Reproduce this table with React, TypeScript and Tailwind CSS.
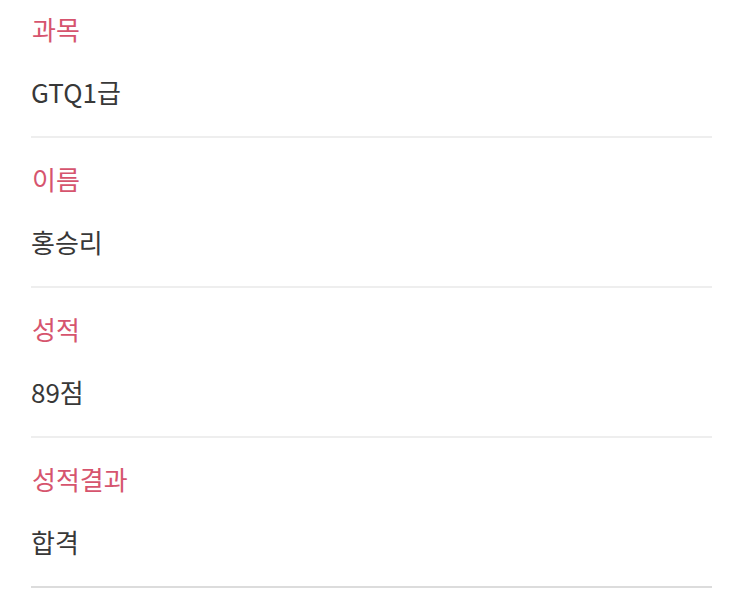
import React from 'react';

const rows = [
  { label: '과목', value: 'GTQ1급' },
  { label: '이름', value: '홍승리' },
  { label: '성적', value: '89점' },
  { label: '성적결과', value: '합격' },
];

export default function App() {
  return (
    <div
      className="w-[743px] h-[610px] bg-white px-[31px] overflow-hidden"
      style={{ fontFamily: '"Noto Sans CJK KR", "Noto Sans", sans-serif' }}
    >
      <div className="-mt-[12px]">
        {rows.map((row, i) => (
          <div
            key={row.label}
            className={`h-[150px] flex flex-col border-b-2 ${i === rows.length - 1 ? 'border-[#dcdcdc]' : 'border-[#eeeeee]'}`}
          >
            <span className="mt-[23px] pl-[1px] text-[26px] leading-[36px] text-[#d6546e]">{row.label}</span>
            <span className="mt-[27px] text-[26px] leading-[36px] text-[#383838]">{row.value}</span>
          </div>
        ))}
      </div>
    </div>
  );
}
